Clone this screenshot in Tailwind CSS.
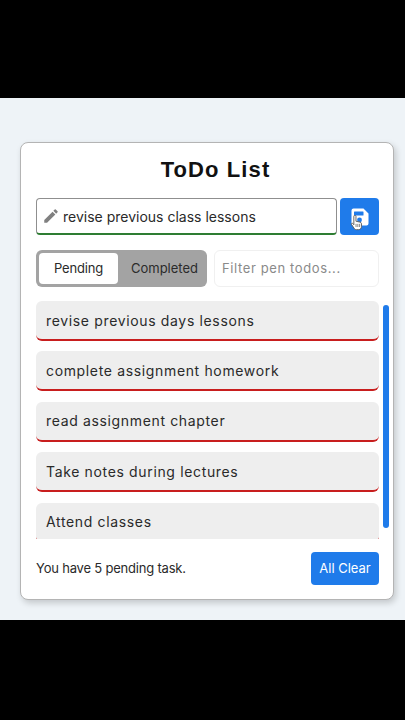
<!DOCTYPE html>
<html>
<head>
<meta charset="utf-8">
<script src="https://cdn.jsdelivr.net/npm/@tailwindcss/browser@4"></script>
</head>
<body class="m-0 bg-black font-['Inter',sans-serif]">
<div class="w-[405px] h-[720px] flex flex-col overflow-hidden bg-black">
  <div class="h-[98px] shrink-0 bg-black"></div>
  <div class="h-[522px] shrink-0 bg-[#eef3f7] pt-[44px] pl-[20px]">
    <div class="w-[374px] h-[458px] bg-white rounded-[8px] border border-[#b4b4b4] shadow-[2px_3px_6px_rgba(0,0,0,0.18)] pl-[15px] flex flex-col">
      <h1 class="h-[55px] pt-[11px] pl-[16px] text-center font-['Liberation_Sans',sans-serif] font-bold text-[22px] leading-[32px] tracking-[1.1px] text-[#111] w-[343px] shrink-0">ToDo List</h1>
      <div class="flex gap-[3px] w-[343px] h-[37px] shrink-0">
        <div class="w-[301px] h-[37px] rounded-[4px] border border-[#8f8f8f] border-b-2 border-b-[#2e7d32] flex items-center pl-[5px] gap-[3px]">
          <svg width="18" height="18" viewBox="0 0 24 24" fill="#808080"><path d="M3 17.25V21h3.75L17.81 9.94l-3.75-3.75L3 17.25zM20.71 7.04a1 1 0 0 0 0-1.41l-2.34-2.34a1 1 0 0 0-1.41 0l-1.83 1.83 3.75 3.75 1.83-1.83z"/></svg>
          <span class="text-[14px] text-[#2a2a2a] tracking-[0px]">revise previous class lessons</span>
        </div>
        <div class="relative w-[39px] h-[37px] rounded-[4px] bg-[#1f7bea] flex items-center justify-center">
          <svg width="18" height="18" viewBox="0 0 18 18"><path d="M2.5 0.5h10l5 5v10a2 2 0 0 1-2 2h-13a2 2 0 0 1-2-2v-13a2 2 0 0 1 2-2z" fill="#fff"/><rect x="3" y="3.5" width="9.5" height="4" rx="0.5" fill="#1f7bea"/><circle cx="8.5" cy="12" r="2.4" fill="#1f7bea"/></svg>
          <svg class="absolute left-[10px] top-[17px]" width="13" height="16" viewBox="0 0 14 18"><path d="M4 1.5a1.2 1.2 0 0 1 2.4 0V7l4.6 1c1 .3 1.6 1 1.6 2v3c0 2-1.4 3.5-3.4 3.5H7c-1.3 0-2.1-.6-2.8-1.7L1.3 10.5c-.5-.9.7-1.8 1.5-1L4 11V1.5z" fill="#fff" stroke="#555" stroke-width="1"/><path d="M6.5 10v3.5M8.5 10v3.5M10.5 10v3.5" stroke="#555" stroke-width="0.8"/></svg>
        </div>
      </div>
      <div class="flex w-[343px] h-[38px] mt-[15px] shrink-0 gap-[7px]">
        <div class="w-[171px] h-[37px] rounded-[6px] bg-[#a3a3a3] p-[3px] flex text-[13px] text-[#2b2b2b]">
          <div class="w-[79px] h-[31px] rounded-[4px] bg-white flex items-center justify-center tracking-[-0.2px]">Pending</div>
          <div class="flex-1 flex items-center justify-end pr-[6px]">Completed</div>
        </div>
        <div class="w-[165px] h-[37px] rounded-[6px] border border-[#f0f0f0] flex items-center pl-[7px] text-[13px] text-[#8a8a8a] tracking-[0.62px]">Filter pen todos...</div>
      </div>
      <div class="relative w-[355px] h-[238px] mt-[13px] shrink-0 overflow-hidden">
        <div class="flex flex-col gap-[10.4px] w-[343px] text-[14px] text-[#2a2a2a] tracking-[0.65px]">
          <div class="h-[40px] shrink-0 rounded-[6px] bg-[#eeeeee] border-b-2 border-[#c81e1e] flex items-center pl-[10px]">revise previous days lessons</div>
          <div class="h-[40px] shrink-0 rounded-[6px] bg-[#eeeeee] border-b-2 border-[#c81e1e] flex items-center pl-[10px]">complete assignment homework</div>
          <div class="h-[40px] shrink-0 rounded-[6px] bg-[#eeeeee] border-b-2 border-[#c81e1e] flex items-center pl-[10px]">read assignment chapter</div>
          <div class="h-[40px] shrink-0 rounded-[6px] bg-[#eeeeee] border-b-2 border-[#c81e1e] flex items-center pl-[10px]">Take notes during lectures</div>
          <div class="h-[40px] shrink-0 rounded-[6px] bg-[#eeeeee] border-b-2 border-[#c81e1e] flex items-center pl-[10px]">Attend classes</div>
        </div>
        <div class="absolute left-[347px] top-[4px] w-[6px] h-[223px] rounded-full bg-[#1f7bea]"></div>
      </div>
      <div class="flex items-center justify-between w-[343px] mt-[13px] h-[33px] shrink-0">
        <span class="text-[13px] text-[#2a2a2a] tracking-[-0.2px]">You have 5 pending task.</span>
        <div class="w-[68px] h-[33px] rounded-[4px] bg-[#1f7bea] text-white text-[13px] flex items-center justify-center">All Clear</div>
      </div>
    </div>
  </div>
  <div class="flex-1 bg-black"></div>
</div>
</body>
</html>
